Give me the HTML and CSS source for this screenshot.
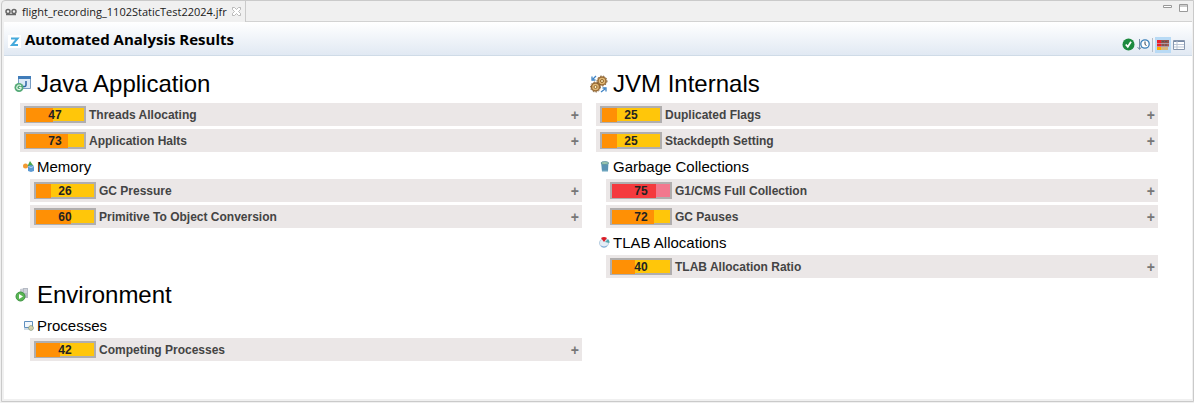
FILE: index.html
```html
<!DOCTYPE html>
<html lang="en">
<head>
    <meta charset="UTF-8">
    <meta name="viewport" content="width=device-width, initial-scale=1.0">
    <title>Automated Analysis Results</title>
    <link rel="stylesheet" href="styles.css">
</head>
<body>

    <div class="editor">
        <div class="tab-bar">
            <div class="tab">
                <svg width="12" height="8" viewBox="0 0 12 8" fill="none" stroke="#666" stroke-width="1.5"><circle cx="3" cy="3.5" r="2"/><circle cx="9" cy="3.5" r="2"/><path d="M1 6.5h10"/></svg>
                <span>flight_recording_1102StaticTest22024.jfr</span>
                <button class="icon-button" aria-label="Close">
                    <svg width="9" height="9" viewBox="0 0 9 9" fill="#fff" stroke="#aaa" stroke-width="0.8"><path d="M.5.5h2l2 2 2-2h2v2l-2 2 2 2v2h-2l-2-2-2 2h-2v-2l2-2-2-2z"/></svg>
                </button>
            </div>
            <div class="window-buttons">
                <button class="icon-button" aria-label="Minimize">
                    <svg width="9" height="9" viewBox="0 0 9 9"><path d="M.5 2.5h8v2h-8z" fill="#fff" stroke="#999"/></svg>
                </button>
                <button class="icon-button" aria-label="Maximize">
                    <svg width="9" height="9" viewBox="0 0 9 9"><path d="M.5 1.5h8v7h-8zM.5 3h8" fill="#fff" stroke="#999"/></svg>
                </button>
            </div>
        </div>

        <div class="page">
            <div class="header">
                <svg width="13" height="13" viewBox="0 0 13 13"><path d="M0 0h13v13H0z" fill="#fff"/><path d="M3 3.5h6.5L4 10h6" fill="none" stroke="#46aadc" stroke-width="2"/></svg>
                <h1>Automated Analysis Results</h1>
                <div class="tools">
                    <button class="icon-button" aria-label="Results OK">
                        <svg width="13" height="13" viewBox="0 0 13 13"><circle cx="6.5" cy="6.5" r="6" fill="#1d8a3e"/><path d="M3.8 6.5l2 2.3 3.2-5" fill="none" stroke="#fff" stroke-width="1.8"/></svg>
                    </button>
                    <button class="icon-button" aria-label="Time range">
                        <svg width="13" height="13" viewBox="0 0 13 13" fill="none"><circle cx="8" cy="6" r="4.2" fill="#fff" stroke="#3b7fb8" stroke-width="1.3"/><path d="M8 3.5v3l1.500 1" stroke="#345"/><path d="M2.500 1v10M.5 9l2 2.500 2-2.500" stroke="#7890a8"/></svg>
                    </button>
                    <span class="divider"></span>
                    <button class="icon-button selected" aria-label="Overview">
                        <svg width="12" height="10" viewBox="0 0 12 10"><path d="M0 0h4v3H0zM0 3.500h4v3H0z" fill="#e8202c"/><path d="M0 7h4v3H0z" fill="#ffa800"/><path d="M4 0h8v3H4z" fill="#96504b"/><path d="M4 3.500h8v3H4z" fill="#a75a55"/><path d="M5 1.500h6M5 5h6" stroke="#555" stroke-dasharray="2 1"/><path d="M4 7h7v3H4z" fill="#d8b47c"/></svg>
                    </button>
                    <button class="icon-button" aria-label="Table view">
                        <svg width="12" height="10" viewBox="0 0 12 10" fill="#fff" stroke="#8797ae"><path d="M.5.5h11v9H.5z"/><path d="M1 1.500h10" stroke="#7588a5"/><path d="M1 4.500h10M1 7h10M4 1v8" stroke="#bac5d5"/></svg>
                    </button>
                </div>
            </div>

            <div class="results">
                <div class="group">
                    <h2>
                        <svg width="18" height="18" viewBox="0 0 18 18"><path d="M4.500 1.500h12v12h-12z" fill="#dceaf7" stroke="#789dc4"/><path d="M4 1h13v3H4z" fill="#3f7cb9"/><path d="M12 6v4q0 2-3 1.500" fill="none" stroke="#2c67a5" stroke-width="1.500"/><circle cx="5" cy="12.500" r="4.500" fill="#55aa78"/><path d="M7 11q-2-2-3.500 0t0 3q2 1.500 3.500-.5v-1H5" fill="none" stroke="#e4f5e8" stroke-width="1.200"/></svg>
                        Java Application
                    </h2>
                    <div class="rule">
                        <div class="score"><div class="fill" style="width: 47%"></div><span>47</span></div>
                        <span class="name">Threads Allocating</span>
                        <button class="expand" aria-label="Expand Threads Allocating">+</button>
                    </div>
                    <div class="rule">
                        <div class="score"><div class="fill" style="width: 73%"></div><span>73</span></div>
                        <span class="name">Application Halts</span>
                        <button class="expand" aria-label="Expand Application Halts">+</button>
                    </div>
                    <div class="subgroup">
                        <h3>
                            <svg width="11" height="11" viewBox="0 0 11 11"><circle cx="2.500" cy="5" r="2.500" fill="#f39a32"/><path d="M7 0l3.500 5h-6z" fill="#48a64c"/><path d="M5 5l3-1 3 1v5l-3 1-3-1z" fill="#5b9ad4"/><path d="M5.500 5.500l2.500 1 2.500-1" fill="none" stroke="#b9d9f0"/></svg>
                            Memory
                        </h3>
                        <div class="rule">
                            <div class="score"><div class="fill" style="width: 26%"></div><span>26</span></div>
                            <span class="name">GC Pressure</span>
                            <button class="expand" aria-label="Expand GC Pressure">+</button>
                        </div>
                        <div class="rule">
                            <div class="score"><div class="fill" style="width: 60%"></div><span>60</span></div>
                            <span class="name">Primitive To Object Conversion</span>
                            <button class="expand" aria-label="Expand Primitive To Object Conversion">+</button>
                        </div>
                    </div>
                </div>

                <div class="group">
                    <h2>
                        <svg width="18" height="18" viewBox="0 0 18 18" fill="none"><g fill="#e0b878" stroke="#9a6c34" stroke-width="1.500"><circle cx="12" cy="6" r="4"/><circle cx="5.500" cy="12" r="4"/></g><g stroke="#7d5a30" stroke-width="1" stroke-dasharray="1.500 1.500"><circle cx="12" cy="6" r="5"/><circle cx="5.500" cy="12" r="5"/></g><g fill="#fff2cc" stroke="#926629"><circle cx="12" cy="6" r="1.500"/><circle cx="5.500" cy="12" r="1.500"/></g><path d="M6 1L3 4M2 1.500V5h3.500M11 17l4-3M12.500 13H16v3.500" stroke="#3f84c5" stroke-width="1.300"/></svg>
                        JVM Internals
                    </h2>
                    <div class="rule">
                        <div class="score"><div class="fill" style="width: 25%"></div><span>25</span></div>
                        <span class="name">Duplicated Flags</span>
                        <button class="expand" aria-label="Expand Duplicated Flags">+</button>
                    </div>
                    <div class="rule">
                        <div class="score"><div class="fill" style="width: 25%"></div><span>25</span></div>
                        <span class="name">Stackdepth Setting</span>
                        <button class="expand" aria-label="Expand Stackdepth Setting">+</button>
                    </div>
                    <div class="subgroup">
                        <h3>
                            <svg width="11" height="11" viewBox="0 0 11 11"><path d="M2 2h7.500L9 10.500H3z" fill="#6ba3bd"/><path d="M4 4v5M6 4v5M8 4v5" stroke="#3f73a0" stroke-width=".7"/><ellipse cx="5.800" cy="2" rx="3.800" ry="1.500" fill="#9cc6ae" stroke="#4f8598" stroke-width=".7"/></svg>
                            Garbage Collections
                        </h3>
                        <div class="rule">
                            <div class="score critical"><div class="fill" style="width: 75%"></div><span>75</span></div>
                            <span class="name">G1/CMS Full Collection</span>
                            <button class="expand" aria-label="Expand G1/CMS Full Collection">+</button>
                        </div>
                        <div class="rule">
                            <div class="score"><div class="fill" style="width: 72%"></div><span>72</span></div>
                            <span class="name">GC Pauses</span>
                            <button class="expand" aria-label="Expand GC Pauses">+</button>
                        </div>
                    </div>
                    <div class="subgroup">
                        <h3>
                            <svg width="11" height="11" viewBox="0 0 11 11"><circle cx="5" cy="6" r="4.500" fill="#e4edf6" stroke="#b7cde0"/><path d="M5 5L2 1q3-2 6 0z" fill="#d91d27"/><path d="M6 5l3-3q2 2 1.500 4z" fill="#54a6ad"/><path d="M2 9q3 2 6 0" fill="none" stroke="#87b3dc"/></svg>
                            TLAB Allocations
                        </h3>
                        <div class="rule">
                            <div class="score"><div class="fill" style="width: 40%"></div><span>40</span></div>
                            <span class="name">TLAB Allocation Ratio</span>
                            <button class="expand" aria-label="Expand TLAB Allocation Ratio">+</button>
                        </div>
                    </div>
                </div>

                <div class="group">
                    <h2>
                        <svg width="18" height="18" viewBox="0 0 18 18"><path d="M6 3l6-1v10l-6 1z" fill="#c8ccd4"/><path d="M9 2h5v10H9z" fill="#b5bac4"/><path d="M10 4h3M10 6h3" stroke="#e8ebf0"/><circle cx="6.500" cy="10.500" r="4.500" fill="#59b553" stroke="#3f9444"/><path d="M5 8l4 2.500L5 13z" fill="#fff"/></svg>
                        Environment
                    </h2>
                    <div class="subgroup">
                        <h3>
                            <svg width="11" height="11" viewBox="0 0 11 11"><path d="M1.500 1.500h8v6h-8z" fill="#f2f7fc" stroke="#5f8fbf"/><path d="M1 9h5" stroke="#9cb5cd"/><circle cx="8" cy="8" r="2.300" fill="#f0e8bb" stroke="#8a9c80"/><circle cx="8" cy="8" r=".6" fill="#778"/></svg>
                            Processes
                        </h3>
                        <div class="rule">
                            <div class="score"><div class="fill" style="width: 42%"></div><span>42</span></div>
                            <span class="name">Competing Processes</span>
                            <button class="expand" aria-label="Expand Competing Processes">+</button>
                        </div>
                    </div>
                </div>
            </div>
        </div>
    </div>

</body>
</html>
```
FILE: styles.css
```css
* {
    box-sizing: border-box;
}

body {
    margin: 0;
    padding: 0 0 1px 1px;
    min-height: 100vh;
    display: flex;
    background-color: #f0f0f0;
    font-family: "Liberation Sans", Arial, sans-serif;
}

h1, h2, h3 {
    margin: 0;
    font-weight: normal;
}

svg {
    display: block;
    flex-shrink: 0;
}

.editor {
    flex: 1;
    display: flex;
    flex-direction: column;
    padding: 0 1px 2px 2px;
    border: 1px solid #cacaca;
    border-radius: 4px 0 0 0;
}

.icon-button {
    display: flex;
    padding: 0;
    border: none;
    background: none;
    cursor: pointer;
}

.tab-bar {
    display: flex;
    justify-content: space-between;
    height: 21px;
}

.tab {
    display: flex;
    align-items: center;
    gap: 5px;
    padding: 0 4px 0 1px;
    border-right: 1px solid #cacaca;
    font-family: "Open Sans", "Noto Sans", sans-serif;
    font-size: 11px;
    line-height: 16px;
    color: #1a1a1a;
}

.window-buttons {
    flex: 1;
    display: flex;
    align-items: flex-start;
    justify-content: flex-end;
    gap: 7px;
    padding: 2px 4px 0 0;
    border-bottom: 1px solid #d2d2d2;
}

.page {
    flex: 1;
    background-color: #fff;
}

.header {
    display: flex;
    align-items: center;
    gap: 4px;
    height: 34px;
    padding: 0 7px 0 4px;
    background: linear-gradient(#fff, #e1e9f3);
    border-bottom: 1px solid #cfdbe7;
}

.header > svg {
    margin-top: 6px;
}

h1 {
    font-family: "Open Sans", "Noto Sans", sans-serif;
    font-size: 15px;
    font-weight: bold;
    line-height: 20px;
    color: #000;
}

.tools {
    display: flex;
    align-items: center;
    gap: 2px;
    margin-left: auto;
    padding-top: 12px;
}

.divider {
    width: 1px;
    height: 14px;
    background-color: #b5bec8;
}

.selected {
    padding: 3px 2px;
    background-color: #b8daf5;
}

.results {
    display: grid;
    grid-template-columns: 1fr 1fr;
    column-gap: 8px;
    padding: 11px 34px 11px 10px;
}

h2 {
    display: flex;
    align-items: center;
    gap: 5px;
    height: 33px;
    font-size: 24px;
    color: #000;
}

h3 {
    display: flex;
    align-items: center;
    gap: 3px;
    height: 24px;
    padding: 4px 0 0 9px;
    font-size: 15px;
    color: #000;
}

.rule {
    display: flex;
    align-items: center;
    gap: 3px;
    height: 23px;
    margin: 3px 0 0 6px;
    padding: 0 3px 0 4px;
    background-color: #ebe7e7;
    font-size: 12px;
    font-weight: bold;
    color: #444;
}

.subgroup .rule {
    margin-left: 16px;
}

/* the fill and the number share one grid cell */
.score {
    display: grid;
    align-items: center;
    width: 62px;
    height: 17px;
    border: 2px solid #b0aeae;
    background-color: #ffc60a;
    color: #222;
}

.score > * {
    grid-area: 1 / 1;
}

.score span {
    text-align: center;
}

.fill {
    height: 100%;
    background-color: #ff9005;
}

.critical {
    background-color: #f2788e;
}

.critical .fill {
    background-color: #f43a3e;
}

.expand {
    margin-left: auto;
    padding: 0;
    border: none;
    background: none;
    font-family: inherit;
    font-size: 14px;
    font-weight: bold;
    color: #777;
    cursor: pointer;
}
```
